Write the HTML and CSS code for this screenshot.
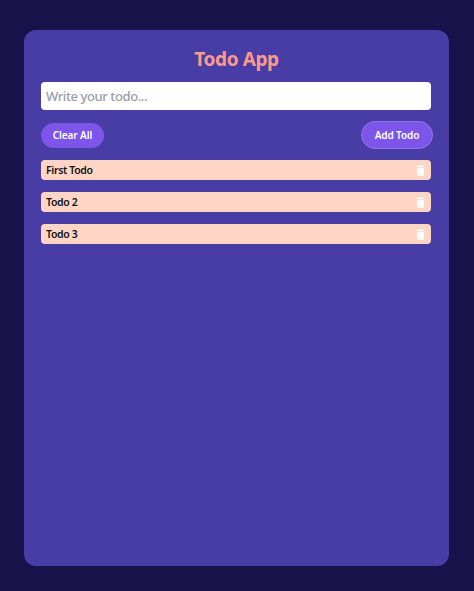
FILE: index.html
```html
<!DOCTYPE html>
<html lang="en">
<head>
    <meta charset="UTF-8">
    <meta name="viewport" content="width=device-width, initial-scale=1.0">
    <title>Todo App</title>
    <link rel="stylesheet" href="styles.css">
</head>
<body>
    <div class="card">
        <h1 class="title">Todo App</h1>
        <input class="todo_input" type="text" placeholder="Write your todo...">
        <div class="actions">
            <button class="btn clear">Clear All</button>
            <button class="btn add">Add Todo</button>
        </div>
        <ul class="list">
            <li class="item">
                <span>First Todo</span>
                <svg class="trash" viewBox="0 0 10 12"><path d="M3.5 0h3l.5 1h3v1.2H0V1h3zM.8 3h8.4l-.6 8.2a.9.9 0 0 1-.9.8H2.3a.9.9 0 0 1-.9-.8z"/></svg>
            </li>
            <li class="item">
                <span>Todo 2</span>
                <svg class="trash" viewBox="0 0 10 12"><path d="M3.5 0h3l.5 1h3v1.2H0V1h3zM.8 3h8.4l-.6 8.2a.9.9 0 0 1-.9.8H2.3a.9.9 0 0 1-.9-.8z"/></svg>
            </li>
            <li class="item">
                <span>Todo 3</span>
                <svg class="trash" viewBox="0 0 10 12"><path d="M3.5 0h3l.5 1h3v1.2H0V1h3zM.8 3h8.4l-.6 8.2a.9.9 0 0 1-.9.8H2.3a.9.9 0 0 1-.9-.8z"/></svg>
            </li>
        </ul>
    </div>
</body>
</html>
```

FILE: styles.css
```css
*{
    box-sizing: border-box;
}
body{
    margin: 0;
    height: 591px;
    padding: 30px 25px 25px 24px;
    background-color: #17134a;
    font-family: "Noto Sans", "Open Sans", sans-serif;
    overflow: hidden;
}
.card{
    height: 536px;
    padding: 17px 17px;
    background-color: #483ca5;
    border-radius: 12px;
}
.title{
    margin: 0 0 9px;
    height: 26px;
    font-size: 19px;
    line-height: 25px;
    font-weight: 700;
    letter-spacing: -0.4px;
    text-align: center;
    color: #fb9a8c;
}
.todo_input{
    display: block;
    width: 390px;
    height: 28px;
    padding: 0 5px;
    border: none;
    border-radius: 4px;
    outline: none;
    background-color: #fff;
    font-family: inherit;
    font-size: 13px;
    font-weight: 500;
    letter-spacing: -0.4px;
}
.todo_input::placeholder{
    color: #9a9cab;
}
.actions{
    display: flex;
    justify-content: space-between;
    align-items: center;
    width: 392px;
    margin-top: 11px;
}
.btn{
    border-radius: 14px;
    color: #fff;
    background-color: #7d55ea;
    font-family: inherit;
    font-size: 10px;
    font-weight: 600;
    letter-spacing: -0.1px;
    padding: 0;
}
.clear{
    width: 63px;
    height: 25px;
    border: none;
}
.add{
    width: 72px;
    height: 28px;
    border: 1.5px solid #9274ee;
}
.list{
    list-style: none;
    width: 390px;
    margin: 11px 0 0;
    padding: 0;
    display: flex;
    flex-direction: column;
    gap: 12px;
}
.item{
    display: flex;
    justify-content: space-between;
    align-items: center;
    height: 20px;
    padding: 0 6px 0 5px;
    border-radius: 4px;
    background-color: #ffd6c6;
    color: #111;
    font-size: 10.5px;
    font-weight: 600;
    letter-spacing: -0.35px;
}
.trash{
    width: 9px;
    height: 11px;
    fill: #fff;
    opacity: 0.9;
}
```
